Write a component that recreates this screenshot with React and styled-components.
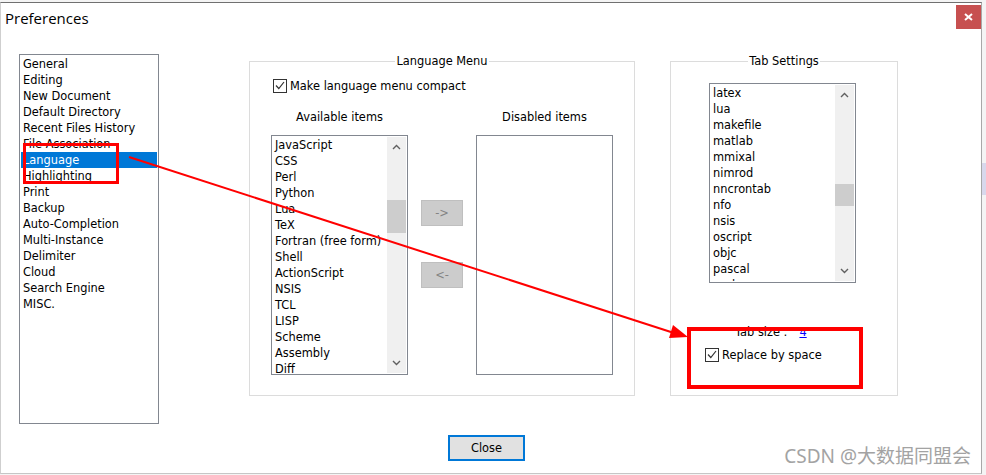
import React from 'react';
import styled, { createGlobalStyle } from 'styled-components';

const GlobalStyle = createGlobalStyle`
  html, body { margin: 0; padding: 0; background: #f4f4f4; }
  body { font-family: "DejaVu Sans", sans-serif; font-size: 11.4px; color: #000; }
`;

const categories = [
  'General', 'Editing', 'New Document', 'Default Directory', 'Recent Files History',
  'File Association', 'Language', 'Highlighting', 'Print', 'Backup', 'Auto-Completion',
  'Multi-Instance', 'Delimiter', 'Cloud', 'Search Engine', 'MISC.'
];

const available = [
  'JavaScript', 'CSS', 'Perl', 'Python', 'Lua', 'TeX', 'Fortran (free form)', 'Shell',
  'ActionScript', 'NSIS', 'TCL', 'LISP', 'Scheme', 'Assembly', 'Diff'
];

const tabLangs = [
  'latex', 'lua', 'makefile', 'matlab', 'mmixal', 'nimrod', 'nncrontab', 'nfo',
  'nsis', 'oscript', 'objc', 'pascal', 'perl'
];

const Screen = styled.div`
  position: relative;
  width: 986px;
  height: 475px;
  padding-top: 2px;
  box-sizing: border-box;
  display: flex;
  overflow: hidden;
`

const Window = styled.div`
  width: 982px;
  height: 472px;
  box-sizing: border-box;
  background: #fff;
  border-top: 1px solid #707070;
  border-left: 1px solid #cfcfcf;
  border-right: 1px solid #a8a8a8;
  border-bottom: 1px solid #c6c6c6;
  display: flex;
  flex-direction: column;
`

const Outside = styled.div`
  flex: 1;
  display: flex;
  flex-direction: column;
  padding-top: 161px;
`

const OutsideTint = styled.div`
  height: 32px;
  background: #d8d8ec;
`

const TitleBar = styled.div`
  height: 30px;
  display: flex;
  justify-content: space-between;
  align-items: flex-start;
`

const Title = styled.div`
  font-family: "Open Sans", sans-serif;
  font-size: 15px;
  padding: 5px 0 0 4px;
  line-height: 20px;
`

const CloseX = styled.div`
  width: 25px;
  height: 24px;
  margin-top: 2px;
  background: #c75050;
  display: flex;
  align-items: center;
  justify-content: center;
`

const Body = styled.div`
  display: flex;
  align-items: flex-start;
  padding: 21px 0 0 18px;
`

const ListBox = styled.div`
  box-sizing: border-box;
  width: ${p => p.$w}px;
  height: ${p => p.$h}px;
  border: 1px solid #828790;
  padding: 1px;
  display: flex;
  background: #fff;
  overflow: hidden;
`

const Items = styled.div`
  flex: 1;
  overflow: hidden;
`

const Row = styled.div`
  box-sizing: border-box;
  height: 16px;
  line-height: 15px;
  padding: 1px 0 0 2px;
  white-space: nowrap;
  background: ${p => (p.$selected ? '#0078d7' : 'transparent')};
  color: ${p => (p.$selected ? '#fff' : '#000')};
`

const Track = styled.div`
  width: 19px;
  background: #f0f0f0;
  display: flex;
  flex-direction: column;
`

const ArrowBox = styled.div`
  height: 20px;
  display: flex;
  align-items: center;
  justify-content: center;
`

const ThumbArea = styled.div`
  flex: 1;
`

const Thumb = styled.div`
  margin-top: ${p => p.$top}px;
  height: ${p => p.$h}px;
  background: #cdcdcd;
`

const Group = styled.fieldset`
  box-sizing: border-box;
  margin: 0 0 0 ${p => p.$ml}px;
  padding: 0;
  min-width: 0;
  width: ${p => p.$w}px;
  height: 342px;
  border: 1px solid #dcdcdc;
  display: flex;
  flex-direction: column;
`

const Legend = styled.legend`
  margin: 0 auto;
  padding: 1px 1px 0;
  line-height: 13px;
`

const CheckRow = styled.label`
  display: flex;
  align-items: center;
  gap: 3px;
  height: 15px;
  margin: ${p => p.$mt}px 0 0 ${p => p.$ml}px;
`

const Box = styled.span`
  box-sizing: border-box;
  width: 14px;
  height: 14px;
  border: 1px solid #333;
  background: #fff;
  display: flex;
  align-items: center;
  justify-content: center;
`

const Columns = styled.div`
  display: flex;
  align-items: flex-start;
  margin: 17px 0 0 21px;
`

const Column = styled.div`
  display: flex;
  flex-direction: column;
  align-items: center;
  gap: 11px;
`

const ColLabel = styled.div`
  padding-top: 1px;
  line-height: 13px;
`

const Mover = styled.div`
  width: 68px;
  padding-top: 90px;
  display: flex;
  flex-direction: column;
  align-items: center;
  gap: 36px;
`

const MoveButton = styled.div`
  box-sizing: border-box;
  width: 42px;
  height: 26px;
  background: #cccccc;
  border: 1px solid #bfbfbf;
  color: #838383;
  display: flex;
  align-items: center;
  justify-content: center;
`

const TabListWrap = styled.div`
  margin: 15px 0 0 38px;
`

const TabSize = styled.div`
  margin: 42px 0 0 64px;
  line-height: 15px;
`

const Link = styled.span`
  color: #0000ff;
  text-decoration: underline;
  margin-left: 12px;
`

const Footer = styled.div`
  display: flex;
  justify-content: center;
  padding: 11px 9px 0 0;
`

const Button = styled.div`
  box-sizing: border-box;
  width: 77px;
  height: 26px;
  border: 2px solid #0078d7;
  background: #e1e1e1;
  display: flex;
  align-items: center;
  justify-content: center;
`

const Overlay = styled.svg`
  position: absolute;
  left: 0;
  top: 0;
  pointer-events: none;
`

const Watermark = styled.div`
  position: absolute;
  right: 15px;
  bottom: 6px;
  font-family: "Noto Sans", "Noto Sans CJK SC", sans-serif;
  font-size: 19px;
  color: #a3a3a3;
  white-space: nowrap;
`

const Chevron = ({ up }) => (
  <svg width="9" height="6" viewBox="0 0 9 6">
    <polyline
      points={up ? '1,5 4.5,1.5 8,5' : '1,1 4.5,4.5 8,1'}
      fill="none"
      stroke="#606060"
      strokeWidth="1.4"
    />
  </svg>
)

const Scrollbar = ({ top, h }) => (
  <Track>
    <ArrowBox><Chevron up /></ArrowBox>
    <ThumbArea><Thumb $top={top} $h={h} /></ThumbArea>
    <ArrowBox><Chevron /></ArrowBox>
  </Track>
)

const Check = ({ label, mt, ml }) => (
  <CheckRow $mt={mt} $ml={ml}>
    <Box>
      <svg width="10" height="9" viewBox="0 0 10 9">
        <polyline points="1,4.5 3.8,7.5 9,1" fill="none" stroke="#333" strokeWidth="1.2" />
      </svg>
    </Box>
    {label}
  </CheckRow>
)

const App = () => {
  return (
    <>
      <GlobalStyle />
      <Screen>
        <Window>
          <TitleBar>
            <Title>Preferences</Title>
            <CloseX>
              <svg width="9" height="8" viewBox="0 0 9 8">
                <path d="M1 1 L8 7 M8 1 L1 7" stroke="#fff" strokeWidth="2" />
              </svg>
            </CloseX>
          </TitleBar>
          <Body>
            <ListBox $w={140} $h={370}>
              <Items>
                {categories.map(c => (
                  <Row key={c} $selected={c === 'Language'}>{c}</Row>
                ))}
              </Items>
            </ListBox>

            <Group $ml={90} $w={386}>
              <Legend>Language Menu</Legend>
              <Check label="Make language menu compact" mt={10} ml={23} />
              <Columns>
                <Column>
                  <ColLabel>Available items</ColLabel>
                  <ListBox $w={137} $h={240}>
                    <Items>
                      {available.map(a => <Row key={a}>{a}</Row>)}
                    </Items>
                    <Scrollbar top={43} h={33} />
                  </ListBox>
                </Column>
                <Mover>
                  <MoveButton>-&gt;</MoveButton>
                  <MoveButton>&lt;-</MoveButton>
                </Mover>
                <Column>
                  <ColLabel>Disabled items</ColLabel>
                  <ListBox $w={137} $h={240} />
                </Column>
              </Columns>
            </Group>

            <Group $ml={35} $w={228}>
              <Legend>Tab Settings</Legend>
              <TabListWrap>
                <ListBox $w={147} $h={200}>
                  <Items>
                    {tabLangs.map(t => <Row key={t}>{t}</Row>)}
                  </Items>
                  <Scrollbar top={79} h={22} />
                </ListBox>
              </TabListWrap>
              <TabSize>Tab size :<Link>4</Link></TabSize>
              <Check label="Replace by space" mt={7} ml={34} />
            </Group>
          </Body>
          <Footer>
            <Button>Close</Button>
          </Footer>
        </Window>
        <Outside>
          <OutsideTint />
        </Outside>

        <Overlay width="986" height="475" viewBox="0 0 986 475">
          <rect x="24.5" y="144.5" width="93" height="38" fill="none" stroke="#ff0000" strokeWidth="3" />
          <rect x="689" y="329" width="172" height="58" fill="none" stroke="#ff0000" strokeWidth="4" />
          <line x1="129" y1="157" x2="674" y2="333" stroke="#ff0000" strokeWidth="2" />
          <polygon points="688,337 669,338 673,325" fill="#ff0000" />
        </Overlay>
        <Watermark>CSDN @大数据同盟会</Watermark>
      </Screen>
    </>
  )
}

export default App;
